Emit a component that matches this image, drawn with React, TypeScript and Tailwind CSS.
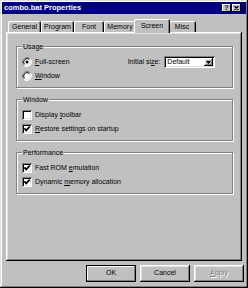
import type { ReactNode } from 'react'

const raised =
  'shadow-[inset_-1px_-1px_0_#000,inset_1px_1px_0_#fff,inset_-2px_-2px_0_#808080,inset_2px_2px_0_#dfdfdf]'
const sunken =
  'shadow-[inset_1px_1px_0_#808080,inset_-1px_-1px_0_#fff,inset_2px_2px_0_#000,inset_-2px_-2px_0_#dfdfdf]'

const tabs = [
  { label: 'General', w: 'w-[33px]' },
  { label: 'Program', w: 'w-[33px]' },
  { label: 'Font', w: 'w-[30px]' },
  { label: 'Memory', w: 'w-[32px]' },
  { label: 'Screen', w: 'w-[36px]', active: true },
  { label: 'Misc', w: 'w-[28px]' },
]

function Group({ label, children, className = '' }: { label: string; children: ReactNode; className?: string }) {
  return (
    <div
      className={`relative h-[42px] w-[217px] border border-[#808080] pt-[8px] pl-[5px] shadow-[inset_1px_1px_0_#fff,1px_1px_0_#fff] ${className}`}
    >
      <span className="absolute left-[5px] top-[-5px] bg-[#c0c0c0] px-[1px] leading-[9px]">{label}</span>
      {children}
    </div>
  )
}

function Radio({ checked }: { checked?: boolean }) {
  return (
    <svg width="10" height="10" viewBox="0 0 10 10" className="shrink-0">
      <circle cx="5" cy="5" r="4" fill="#fff" />
      <path d="M1.82 8.18 A4.5 4.5 0 0 1 8.18 1.82" fill="none" stroke="#808080" />
      <path d="M8.18 1.82 A4.5 4.5 0 0 1 1.82 8.18" fill="none" stroke="#fff" />
      <path d="M2.53 7.47 A3.5 3.5 0 0 1 7.47 2.53" fill="none" stroke="#000" />
      <path d="M7.47 2.53 A3.5 3.5 0 0 1 2.53 7.47" fill="none" stroke="#dfdfdf" />
      {checked && <circle cx="5" cy="5" r="1.5" fill="#000" />}
    </svg>
  )
}

function Check({ checked }: { checked?: boolean }) {
  return (
    <div className={`h-[10px] w-[10px] shrink-0 bg-white ${sunken}`}>
      {checked && (
        <svg width="10" height="10" viewBox="0 0 10 10">
          <path d="M2.4 4.4 L4.2 6.4 L7.7 2.7" fill="none" stroke="#000" strokeWidth="1.7" />
        </svg>
      )}
    </div>
  )
}

function Row({ children }: { children: ReactNode }) {
  return <div className="flex h-[14px] items-center gap-[3px]">{children}</div>
}

export default function App() {
  return (
    <div
      className={`flex h-[288px] w-[248px] flex-col bg-[#c0c0c0] p-[2px] font-['Liberation_Sans',Arial,sans-serif] text-[7px] text-black shadow-[inset_-1px_-1px_0_#000,inset_1px_1px_0_#dfdfdf,inset_-2px_-2px_0_#808080,inset_2px_2px_0_#fff]`}
    >
      {/* title bar */}
      <div className="flex h-[12px] items-center justify-between bg-[#000080] pl-[2px] pr-[5px]">
        <span className="text-[7.5px] font-bold leading-none text-white">combo.bat Properties</span>
        <div className="flex gap-[1px]">
          <div className="flex h-[8px] w-[9px] items-center justify-center bg-[#c0c0c0] text-[6.5px] font-bold leading-none shadow-[inset_-1px_-1px_0_#000,inset_1px_1px_0_#fff]">
            ?
          </div>
          <div className="flex h-[8px] w-[9px] items-center justify-center bg-[#c0c0c0] shadow-[inset_-1px_-1px_0_#000,inset_1px_1px_0_#fff]">
            <svg width="5" height="4" viewBox="0 0 5 4">
              <path d="M0.5 0 L4.5 4 M4.5 0 L0.5 4" stroke="#000" strokeWidth="1.2" />
            </svg>
          </div>
        </div>
      </div>

      {/* tabs */}
      <div className="mt-[5px] ml-[6px] flex h-[13px] items-end">
        {tabs.map(t => (
          <div
            key={t.label}
            className={`flex items-center justify-center rounded-t-[2px] bg-[#c0c0c0] leading-none shadow-[inset_1px_1px_0_#fff,inset_-1px_0_0_#000,inset_-2px_0_0_#808080] ${t.w} ${
              t.active ? 'relative z-10 -mx-[2px] mb-[-1px] h-[14px] pb-[1px]' : 'h-[11px]'
            }`}
          >
            {t.label}
          </div>
        ))}
      </div>

      {/* panel */}
      <div className={`ml-[4px] h-[229px] w-[236px] pt-[14px] pl-[10px] ${raised}`}>
        <Group label="Usage">
          <div className="flex">
            <div className="flex flex-col">
              <Row>
                <Radio checked />
                <span>
                  <u>F</u>ull-screen
                </span>
              </Row>
              <Row>
                <Radio />
                <span>
                  <u>W</u>indow
                </span>
              </Row>
            </div>
            <div className="ml-[58px] flex h-[14px] items-center gap-[4px]">
              <span>
                Initial si<u>z</u>e:
              </span>
              <div className={`flex h-[12px] w-[51px] items-center justify-between bg-white p-[2px] ${sunken}`}>
                <span className="pl-[1px]">Default</span>
                <div className={`flex h-[8px] w-[9px] items-center justify-center bg-[#c0c0c0] ${raised}`}>
                  <svg width="5" height="3" viewBox="0 0 5 3">
                    <path d="M0 0 H5 L2.5 3 Z" fill="#000" />
                  </svg>
                </div>
              </div>
            </div>
          </div>
        </Group>

        <Group label="Window" className="mt-[11px]">
          <Row>
            <Check />
            <span>
              Display <u>t</u>oolbar
            </span>
          </Row>
          <Row>
            <Check checked />
            <span>
              <u>R</u>estore settings on startup
            </span>
          </Row>
        </Group>

        <Group label="Performance" className="mt-[11px]">
          <Row>
            <Check checked />
            <span>
              Fast ROM <u>e</u>mulation
            </span>
          </Row>
          <Row>
            <Check checked />
            <span>
              Dynamic <u>m</u>emory allocation
            </span>
          </Row>
        </Group>
      </div>

      {/* buttons */}
      <div className="mt-[4px] mr-[2px] flex justify-end gap-[4px]">
        <div className="flex h-[17px] w-[50px] items-center justify-center border border-black bg-[#c0c0c0] shadow-[inset_-1px_-1px_0_#808080,inset_1px_1px_0_#fff]">
          OK
        </div>
        <div className={`flex h-[17px] w-[50px] items-center justify-center bg-[#c0c0c0] ${raised}`}>Cancel</div>
        <div
          className={`flex h-[17px] w-[50px] items-center justify-center bg-[#c0c0c0] text-[#808080] [text-shadow:1px_1px_0_#fff] ${raised}`}
        >
          <span>
            <u>A</u>pply
          </span>
        </div>
      </div>
    </div>
  )
}
